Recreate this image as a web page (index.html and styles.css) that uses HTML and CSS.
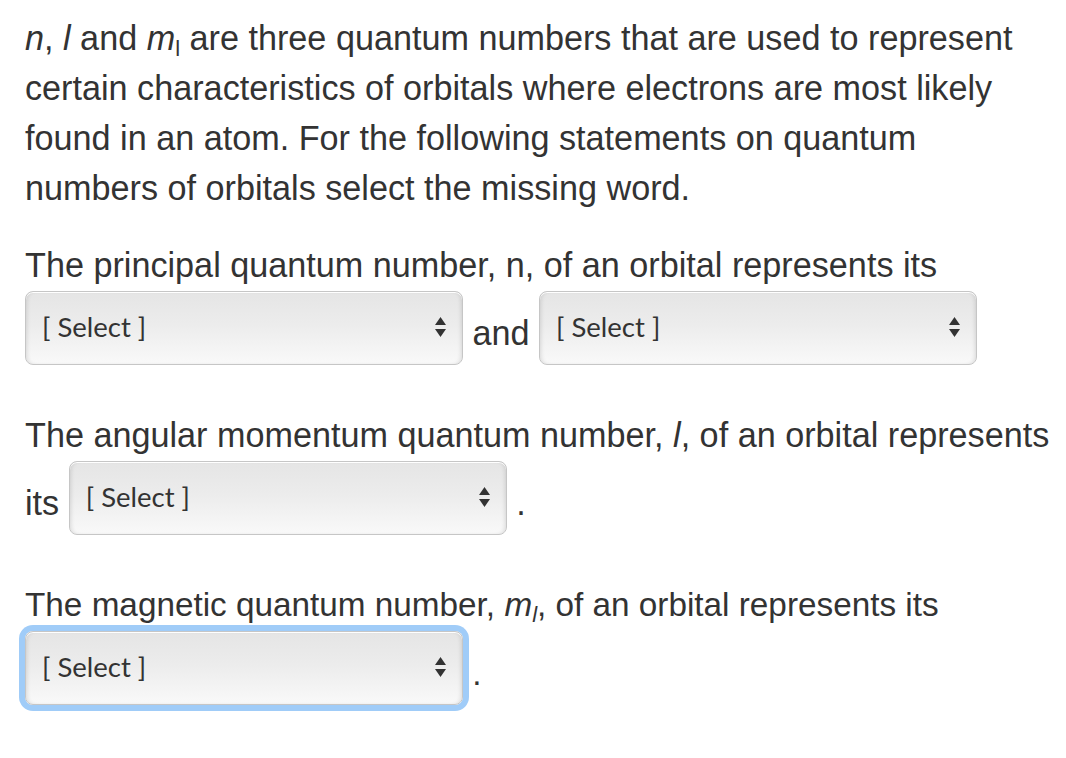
FILE: index.html
```html
<!DOCTYPE html>
<html lang="en">
<head>
<meta charset="utf-8">
<title>Quantum numbers</title>
<link rel="stylesheet" href="styles.css">
</head>
<body>
<div class="question">
  <p class="para"><i>n</i>, <i>l</i> and <i>m</i><sub class="sub">l</sub> are three quantum numbers that are used to represent certain characteristics of orbitals where electrons are most likely found in an atom. For the following statements on quantum numbers of orbitals select the missing word.</p>

  <p class="para">The principal quantum number, n, of an orbital represents its <span class="sel"><span class="sel-in"><span class="sel-text">[ Select ]</span><svg class="arrows" width="11" height="21" viewBox="0 0 11 21"><path d="M5.5 0 L11 8 L0 8 Z M0 12 L11 12 L5.5 20 Z" fill="#333"/></svg></span></span> and <span class="sel"><span class="sel-in"><span class="sel-text">[ Select ]</span><svg class="arrows" width="11" height="21" viewBox="0 0 11 21"><path d="M5.5 0 L11 8 L0 8 Z M0 12 L11 12 L5.5 20 Z" fill="#333"/></svg></span></span></p>

  <p class="para">The angular momentum quantum number, <i>l</i>, of an orbital represents its <span class="sel"><span class="sel-in"><span class="sel-text">[ Select ]</span><svg class="arrows" width="11" height="21" viewBox="0 0 11 21"><path d="M5.5 0 L11 8 L0 8 Z M0 12 L11 12 L5.5 20 Z" fill="#333"/></svg></span></span> .</p>

  <p class="para para-tight">The magnetic quantum number, <i>m</i><sub class="sub"><i>l</i></sub>, of an orbital represents its <span class="sel focused"><span class="sel-in"><span class="sel-text">[ Select ]</span><svg class="arrows" width="11" height="21" viewBox="0 0 11 21"><path d="M5.5 0 L11 8 L0 8 Z M0 12 L11 12 L5.5 20 Z" fill="#333"/></svg></span></span> .</p>
</div>
</body>
</html>
```

FILE: styles.css
```css
html, body {
  margin: 0;
  padding: 0;
  background: #ffffff;
}

body {
  font-family: "Liberation Sans", Arial, Helvetica, sans-serif;
  font-size: 34.2px;
  line-height: 50px;
  color: #333333;
}

.question {
  padding: 13px 12px 0 25px;
}

.para {
  margin: 0 0 27px 0;
}

.para-tight {
  font-size: 33.3px;
}

.sub {
  font-size: 22px;
  line-height: 0;
  vertical-align: -6px;
}

.sel {
  display: inline-block;
  overflow: hidden;
  vertical-align: -38px;
  width: 438px;
  height: 74px;
  margin: 1px 0 18px 0;
  box-sizing: border-box;
  border: 1px solid #c6c6c6;
  border-radius: 8px;
  background: linear-gradient(to bottom, #e5e5e5 0%, #ececec 45%, #f9f9f9 100%);
  box-shadow: inset 0 1px 0 #ffffff, inset 3px 0 4px -2px rgba(0,0,0,0.12), inset -3px 0 4px -2px rgba(0,0,0,0.12);
}

.sel.focused {
  box-shadow: 0 0 0 6px #a0ccf8, inset 0 1px 0 #ffffff, inset 3px 0 4px -2px rgba(0,0,0,0.12), inset -3px 0 4px -2px rgba(0,0,0,0.12);
}

.sel-in {
  display: flex;
  align-items: center;
  justify-content: space-between;
  height: 100%;
  padding: 0 16px 0 16px;
  box-sizing: border-box;
}

.sel-text {
  font-family: Lato, "Liberation Sans", sans-serif;
  font-size: 27.5px;
  line-height: 1;
  color: #333333;
  margin-top: -3px;
}

.arrows {
  display: block;
  margin-top: -2px;
}
```
